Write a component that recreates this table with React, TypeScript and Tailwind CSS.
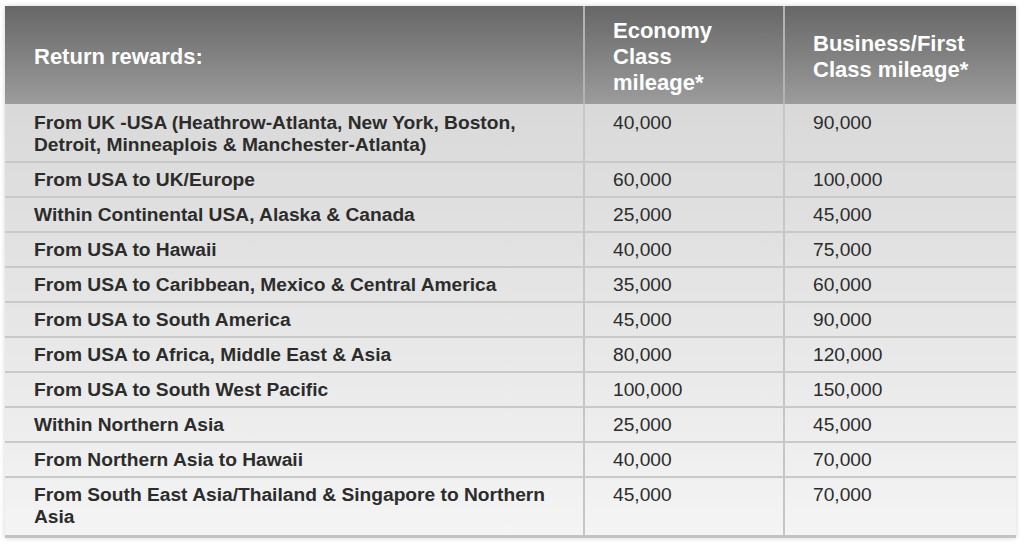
import React from "react";

const rows: { label: string; eco: string; biz: string; h: string; pt: string }[] = [
  { label: "From UK -USA (Heathrow-Atlanta, New York, Boston, Detroit, Minneaplois & Manchester-Atlanta)", eco: "40,000", biz: "90,000", h: "h-[59px]", pt: "pt-[8px]" },
  { label: "From USA to UK/Europe", eco: "60,000", biz: "100,000", h: "h-[35px]", pt: "pt-[6px]" },
  { label: "Within Continental USA, Alaska & Canada", eco: "25,000", biz: "45,000", h: "h-[35px]", pt: "pt-[6px]" },
  { label: "From USA to Hawaii", eco: "40,000", biz: "75,000", h: "h-[35px]", pt: "pt-[6px]" },
  { label: "From USA to Caribbean, Mexico & Central America", eco: "35,000", biz: "60,000", h: "h-[35px]", pt: "pt-[6px]" },
  { label: "From USA to South America", eco: "45,000", biz: "90,000", h: "h-[35px]", pt: "pt-[6px]" },
  { label: "From USA to Africa, Middle East & Asia", eco: "80,000", biz: "120,000", h: "h-[35px]", pt: "pt-[6px]" },
  { label: "From USA to South West Pacific", eco: "100,000", biz: "150,000", h: "h-[35px]", pt: "pt-[6px]" },
  { label: "Within Northern Asia", eco: "25,000", biz: "45,000", h: "h-[35px]", pt: "pt-[6px]" },
  { label: "From Northern Asia to Hawaii", eco: "40,000", biz: "70,000", h: "h-[35px]", pt: "pt-[6px]" },
  { label: "From South East Asia/Thailand & Singapore to Northern Asia", eco: "45,000", biz: "70,000", h: "h-[57px]", pt: "pt-[6px]" },
];

export default function App() {
  return (
    <div className="w-[1024px] h-[548px] bg-white pt-[6px] pl-[5px]" style={{ fontFamily: '"Liberation Sans", Arial, Helvetica, sans-serif' }}>
      <div className="w-[1011px] shadow-[0_0_5px_rgba(0,0,0,0.18)] border-b-[3px] border-[#c3c3c3]">
        <div className="grid grid-cols-[580px_200px_231px] h-[98px] bg-gradient-to-b from-[#676767] to-[#9c9c9c] text-white font-bold text-[22px] leading-[26px]">
          <div className="flex items-center pl-[29px] pt-[3px] border-r-2 border-[#b3b3b3]">Return rewards:</div>
          <div className="flex items-center pl-[28px] pt-[3px] border-r-2 border-[#b3b3b3]">
            <span>Economy<br />Class<br />mileage*</span>
          </div>
          <div className="flex items-center pl-[28px] pt-[3px]">
            <span>Business/First<br />Class mileage*</span>
          </div>
        </div>
        <div className="bg-gradient-to-b from-[#d9d9d9] to-[#f4f4f4] text-[#2c2c2c] text-[19.2px] leading-[22px]">
          {rows.map((r, i) => (
            <div
              key={i}
              className={`grid grid-cols-[580px_200px_231px] ${r.h} ${i < rows.length - 1 ? "border-b-2 border-[#c9c9c9]" : ""}`}
            >
              <div className={`${r.pt} pl-[29px] pr-[20px] font-bold border-r-2 border-[#c6c6c6]`}>{r.label}</div>
              <div className={`${r.pt} pl-[28px] border-r-2 border-[#c6c6c6]`}>{r.eco}</div>
              <div className={`${r.pt} pl-[28px]`}>{r.biz}</div>
            </div>
          ))}
        </div>
      </div>
    </div>
  );
}
